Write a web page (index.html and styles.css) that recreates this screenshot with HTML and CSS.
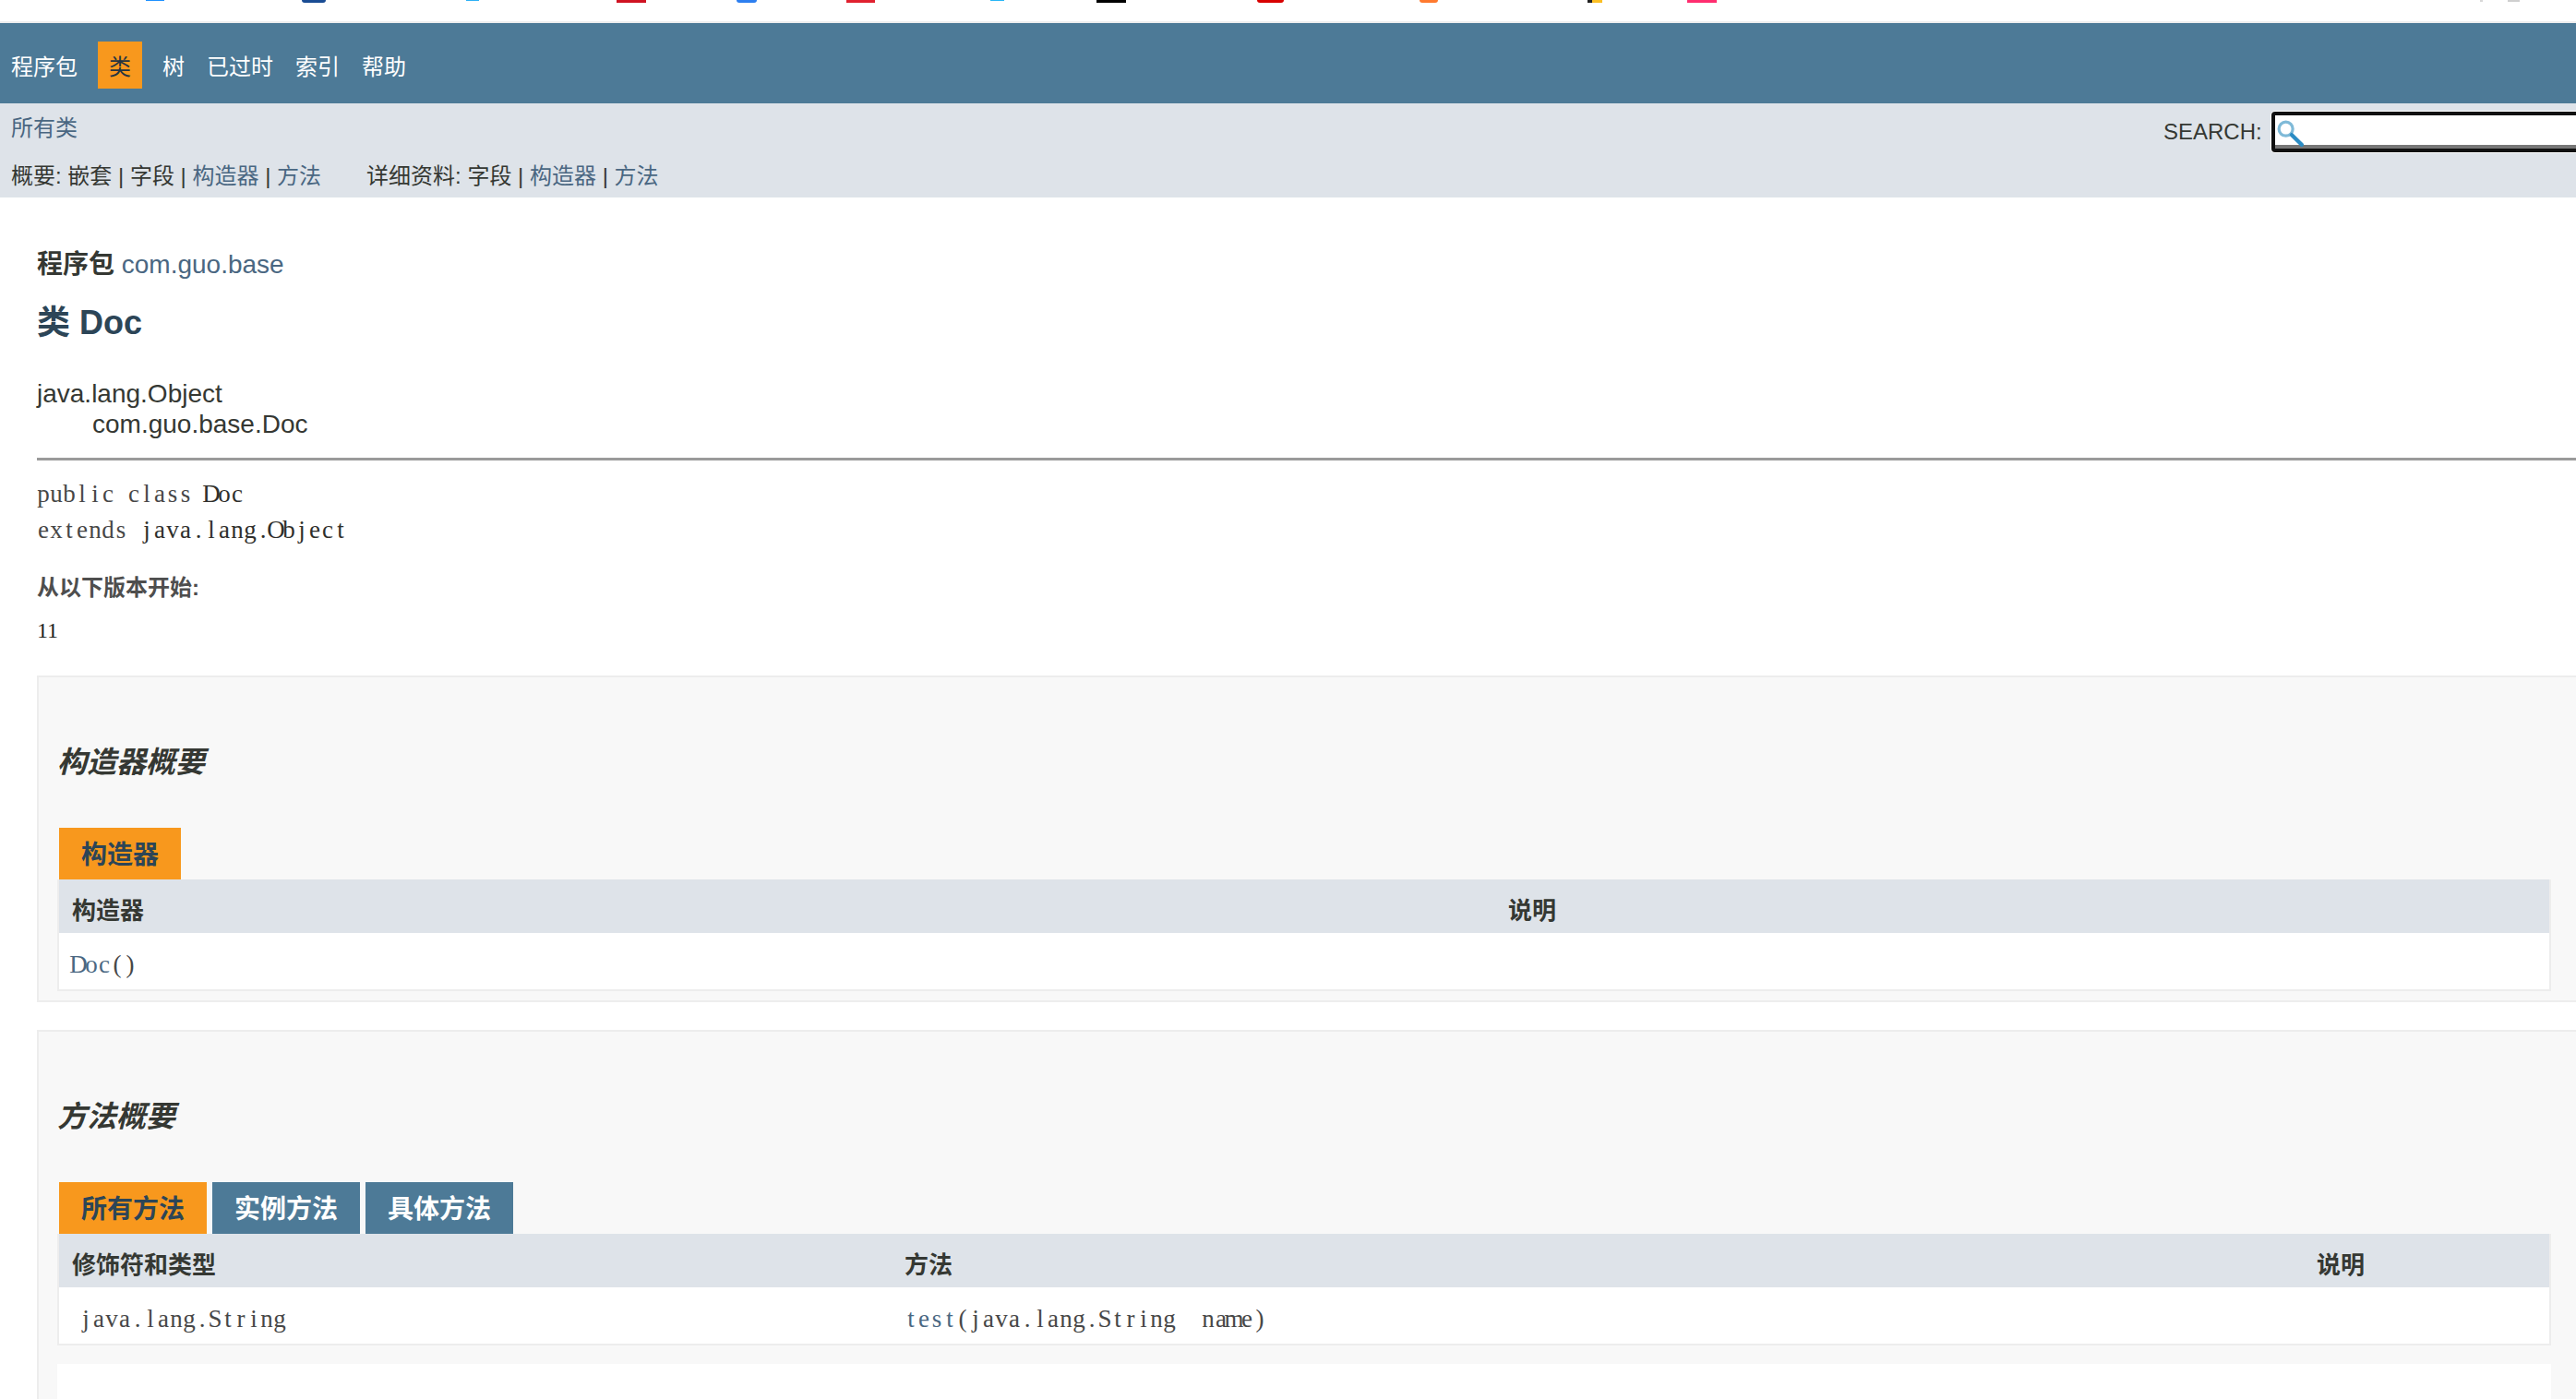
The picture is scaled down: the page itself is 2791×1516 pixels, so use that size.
FILE: index.html
```html
<!DOCTYPE html>
<html lang="zh-CN">
<head>
<meta charset="utf-8">
<title>Doc</title>
<link rel="stylesheet" href="styles.css">
</head>
<body>
<div class="bookmarks">
  <i class="mark m1"></i><i class="mark m2"></i><i class="mark m3"></i><i class="mark m4"></i><i class="mark m5"></i><i class="mark m6"></i><i class="mark m7"></i><i class="mark m8"></i><i class="mark m9"></i><i class="mark m10"></i><i class="mark m11"></i><i class="mark m12"></i><i class="mark m13"></i><i class="mark m14"></i>
</div>
<nav class="topnav">
  <a class="nav-item">程序包</a>
  <a class="nav-item active">类</a>
  <a class="nav-item">树</a>
  <a class="nav-item">已过时</a>
  <a class="nav-item">索引</a>
  <a class="nav-item">帮助</a>
</nav>
<div class="subnav">
  <div class="subnav-row first">
    <a class="link">所有类</a>
    <div class="search">
      <label class="search-label">SEARCH:</label>
      <div class="search-box">
        <input class="search-input" type="text">
        <svg class="search-icon" viewBox="0 0 28 28" width="30" height="30" aria-hidden="true">
          <circle cx="9" cy="10" r="7" fill="none" stroke="#7fbad8" stroke-width="3"/>
          <path d="M15 16 L25 26" fill="none" stroke="#2b8cc4" stroke-width="4" stroke-linecap="round"/>
        </svg>
      </div>
    </div>
  </div>
  <div class="subnav-row second">
    <span class="crumb">概要: 嵌套 | 字段 | <a class="link">构造器</a> | <a class="link">方法</a></span>
    <span class="crumb detail">详细资料: 字段 | <a class="link">构造器</a> | <a class="link">方法</a></span>
  </div>
</div>
<main class="content">
  <div class="pkg"><b>程序包</b> <a class="link">com.guo.base</a></div>
  <h2 class="class-title">类 Doc</h2>
  <div class="inherit">
    <div>java.lang.Object</div>
    <div class="inherit-child">com.guo.base.Doc</div>
  </div>
  <div class="rule"></div>
  <div class="signature">
    <div class="mono">public class <span class="strong">Doc</span></div>
    <div class="mono">extends <span class="strong">java.lang.Object</span></div>
  </div>
  <div class="since-label">从以下版本开始:</div>
  <div class="since-value">11</div>

  <section class="summary">
    <h3 class="summary-title">构造器概要</h3>
    <div class="tabs">
      <span class="tab active">构造器</span>
    </div>
    <table class="member-table">
      <colgroup><col class="c-ctor"><col></colgroup>
      <thead><tr><th>构造器</th><th>说明</th></tr></thead>
      <tbody><tr><td class="mono"><a class="link">Doc</a>()</td><td></td></tr></tbody>
    </table>
  </section>

  <section class="summary second">
    <h3 class="summary-title">方法概要</h3>
    <div class="tabs">
      <span class="tab active">所有方法</span>
      <span class="tab">实例方法</span>
      <span class="tab">具体方法</span>
    </div>
    <table class="member-table">
      <colgroup><col class="c-type"><col class="c-method"><col></colgroup>
      <thead><tr><th>修饰符和类型</th><th>方法</th><th>说明</th></tr></thead>
      <tbody><tr><td class="mono type-cell">java.lang.String</td><td class="mono"><a class="link">test</a>(java.lang.String&nbsp; name)</td><td></td></tr></tbody>
    </table>
    <div class="details"></div>
  </section>
</main>
<script src="mono.js"></script>
</body>
</html>
```
FILE: styles.css
```css
html, body {
  margin: 0;
  padding: 0;
  background: #fff;
}
body {
  width: 2791px;
  height: 1516px;
  overflow: hidden;
  font-family: "Liberation Sans", "Noto Sans CJK SC", sans-serif;
  font-size: 28px;
  color: #353833;
}
a { text-decoration: none; }
.link { color: #4a6782; }

/* cut-off browser bookmark icons */
.bookmarks {
  height: 23px;
  border-bottom: 2px solid #eeeeee;
  display: flex;
  align-items: flex-start;
}
.mark { display: block; flex: none; height: 3px; }
.m1 { margin-left: 158px; width: 20px; height: 1px; background: #1e90ff; }
.m2 { margin-left: 149px; width: 26px; background: #1a4c94; border-radius: 0 0 10px 10px; }
.m3 { margin-left: 152px; width: 14px; height: 1px; background: #2db0f5; }
.m4 { margin-left: 149px; width: 32px; background: #cf1322; }
.m5 { margin-left: 98px; width: 22px; background: #2d7ff0; border-radius: 0 0 10px 10px; }
.m6 { margin-left: 97px; width: 31px; background: #e0212f; }
.m7 { margin-left: 125px; width: 15px; height: 1px; background: #29b6f6; }
.m8 { margin-left: 100px; width: 32px; background: #000; }
.m9 { margin-left: 142px; width: 29px; background: #d80000; border-radius: 0 0 10px 10px; }
.m10 { margin-left: 147px; width: 20px; background: #ff7a2f; border-radius: 0 0 10px 10px; }
.m11 { margin-left: 162px; width: 16px; background: linear-gradient(100deg, #222 0 30%, #fbbf24 30%); }
.m12 { margin-left: 92px; width: 32px; background: #ff2d6f; }
.m13 { margin-left: 827px; width: 3px; height: 2px; background: #d8d8d8; }
.m14 { margin-left: 27px; width: 13px; height: 2px; background: #cfcfcf; }

/* top navigation */
.topnav {
  height: 87px;
  box-sizing: border-box;
  padding-top: 20px;
  background: #4d7a97;
  display: flex;
  align-items: flex-start;
  font-size: 24px;
}
.nav-item {
  height: 51px;
  line-height: 55px;
  padding: 0 12px;
  color: #fff;
}
.nav-item.active {
  margin: 0 10px;
  background: #f8981d;
  color: #253441;
}

/* sub navigation */
.subnav {
  height: 102px;
  background: #dee3e9;
  font-size: 24px;
}
.subnav-row {
  display: flex;
  padding-left: 12px;
}
.subnav-row.first { height: 54px; }
.first > .link { line-height: 54px; }
.subnav-row.second { height: 48px; line-height: 49px; }
.crumb.detail { margin-left: 49px; }
.search {
  margin-left: auto;
  width: 447px;
  flex: none;
  display: flex;
  align-items: flex-start;
  padding-top: 9px;
  box-sizing: border-box;
}
.search-label {
  line-height: 44px;
  width: 117px;
  flex: none;
}
.search-box {
  position: relative;
  flex: none;
  height: 44px;
}
.search-input {
  display: block;
  width: 500px;
  height: 44px;
  box-sizing: border-box;
  margin: 0;
  padding: 0 8px;
  border: 4px solid #111;
  border-radius: 4px;
  background: #fff;
  box-shadow: inset 0 -4px 0 #777, 0 0 0 1px #fff;
  outline: none;
}
.search-icon {
  position: absolute;
  left: 6px;
  top: 8px;
}

/* content */
.content {
  width: 2766px;
  padding-left: 40px;
}
.pkg {
  padding-top: 53px;
  line-height: 40px;
}
.class-title {
  margin: 19px 0 0;
  font-size: 36px;
  line-height: 48px;
  font-weight: bold;
  color: #2c4557;
}
.inherit {
  margin-top: 36px;
  line-height: 33px;
}
.inherit-child { padding-left: 60px; }
.rule {
  margin-top: 20px;
  height: 3px;
  background: #9a9a9a;
}
.signature { margin-top: 17px; line-height: 39px; }
.mono {
  font-family: "Liberation Serif", serif;
  font-size: 27px;
  color: #474747;
}
.ch {
  display: inline-flex;
  justify-content: center;
  width: 14px;
  white-space: pre;
}
.strong { color: #2f2f2c; }
.since-label {
  margin-top: 23px;
  font-size: 24px;
  font-weight: bold;
  line-height: 40px;
  color: #4e4e4e;
}
.since-value {
  margin-top: 10px;
  font-family: "Liberation Serif", serif;
  font-size: 24px;
  line-height: 32px;
  color: #222;
}

/* summary blocks */
.summary {
  margin-top: 33px;
  border: 2px solid #ededed;
  background: #f8f8f8;
  padding: 0 40px 10px 20px;
}
.summary.second {
  margin-top: 30px;
  height: 460px;
  padding-bottom: 0;
  overflow: hidden;
}
.summary-title {
  margin: 0;
  padding-top: 70px;
  font-size: 32px;
  line-height: 44px;
  font-style: italic;
  font-weight: bold;
  color: #353833;
}
.tabs {
  display: flex;
  gap: 6px;
  margin-top: 49px;
  padding-left: 2px;
}
.tab {
  height: 56px;
  line-height: 60px;
  padding: 0 24px;
  background: #4d7a97;
  color: #fff;
  font-weight: bold;
}
.tab.active {
  background: #f8981d;
  color: #2c4557;
}
.member-table {
  width: 2702px;
  border-collapse: separate;
  border-spacing: 0;
  table-layout: fixed;
  border: 2px solid #ededed;
  border-top: none;
}
.c-ctor { width: 1556px; }
.c-type { width: 902px; }
.c-method { width: 1530px; }
.member-table th {
  height: 54px;
  padding: 4px 0 0 14px;
  background: #dee3e9;
  text-align: left;
  font-size: 26px;
  font-weight: bold;
  color: #353833;
}
.member-table td {
  height: 53px;
  padding: 8px 0 0 14px;
  background: #fff;
}
.member-table td.type-cell { padding-left: 22px; }
.details {
  margin-top: 20px;
  height: 200px;
  background: #fff;
}
```
FILE: mono.js
```js
// The reference's code font sets every Latin glyph in a half-em cell.
function cellify(node) {
  Array.from(node.childNodes).forEach(function (child) {
    if (child.nodeType === 1) {
      cellify(child);
    } else if (child.nodeType === 3) {
      var frag = document.createDocumentFragment();
      Array.from(child.textContent).forEach(function (c) {
        var cell = document.createElement('span');
        cell.className = 'ch';
        cell.textContent = c;
        frag.appendChild(cell);
      });
      node.replaceChild(frag, child);
    }
  });
}
document.querySelectorAll('.mono').forEach(cellify);
```
